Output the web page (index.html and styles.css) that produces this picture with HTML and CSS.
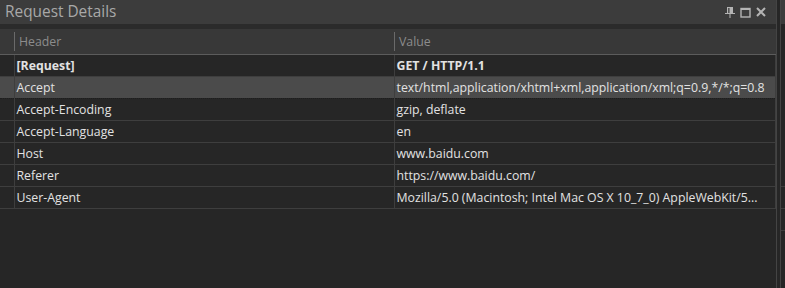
FILE: index.html
```html
<!DOCTYPE html>
<html lang="en">

<head>
    <meta charset="UTF-8" />
    <meta name="viewport" content="width=device-width, initial-scale=1" />
    <title>Request Details</title>
    <link rel="stylesheet" href="styles.css">
</head>

<body>
    <div class="panel">
        <div class="panel-main">
            <div class="titulo-barra">
                <span class="titulo">Request Details</span>
                <div class="botones-ventana">
                    <svg width="10" height="12" viewBox="0 0 10 12"><path d="M2 1h6v6h2v1H5.5v4h-1V8H0V7h2z M3.2 2v5h1.3V2z" fill="#b4b4b4" fill-rule="evenodd"/></svg>
                    <svg width="11" height="11" viewBox="0 0 11 11"><rect x="1" y="1.5" width="9" height="8.5" fill="none" stroke="#b4b4b4" stroke-width="1.4"/><rect x="1" y="1" width="9" height="2" fill="#b4b4b4"/></svg>
                    <svg width="10" height="10" viewBox="0 0 10 10"><path d="M1 1l8 8M9 1l-8 8" stroke="#b4b4b4" stroke-width="2"/></svg>
                </div>
            </div>
            <div class="separador"></div>
            <table class="tabla-detalles">
                <thead>
                    <tr>
                        <th class="col-fila"></th>
                        <th class="col-header"><span class="th-texto">Header</span></th>
                        <th><span class="th-texto">Value</span></th>
                    </tr>
                </thead>
                <tbody>
                    <tr class="fila-negrita">
                        <td class="col-fila"></td>
                        <td>[Request]</td>
                        <td>GET / HTTP/1.1</td>
                    </tr>
                    <tr class="fila-seleccionada">
                        <td class="col-fila"></td>
                        <td>Accept</td>
                        <td>text/html,application/xhtml+xml,application/xml;q=0.9,*/*;q=0.8</td>
                    </tr>
                    <tr>
                        <td class="col-fila"></td>
                        <td>Accept-Encoding</td>
                        <td>gzip, deflate</td>
                    </tr>
                    <tr>
                        <td class="col-fila"></td>
                        <td>Accept-Language</td>
                        <td>en</td>
                    </tr>
                    <tr>
                        <td class="col-fila"></td>
                        <td>Host</td>
                        <td>www.baidu.com</td>
                    </tr>
                    <tr>
                        <td class="col-fila"></td>
                        <td>Referer</td>
                        <td>https://www.baidu.com/</td>
                    </tr>
                    <tr>
                        <td class="col-fila"></td>
                        <td>User-Agent</td>
                        <td>Mozilla/5.0 (Macintosh; Intel Mac OS X 10_7_0) AppleWebKit/5...</td>
                    </tr>
                </tbody>
            </table>
        </div>
        <div class="panel-lateral">
            <div class="lateral-cabecera"></div>
            <div class="lateral-cuerpo"></div>
        </div>
    </div>
</body>

</html>
```

FILE: styles.css
```css
body {
    margin: 0;
    background-color: #262626;
    font-family: "Open Sans", "Noto Sans", sans-serif;
    font-size: 12.3px;
    color: #e2e2e2;
}

.panel {
    display: flex;
    height: 288px;
}

.panel-main {
    width: 776px;
    display: flex;
    flex-direction: column;
    border-right: 1px solid #444;
}

.panel-lateral {
    flex: 1;
    margin-left: 3px;
    border-left: 1px solid #444;
    background-color: #262626;
}

.lateral-cabecera {
    height: 24px;
    background-color: #3c3c3c;
}

.lateral-cuerpo {
    margin-top: 162px;
    height: 66px;
    background: repeating-linear-gradient(#3e3e3e 0 1px, transparent 1px 22px);
}

.titulo-barra {
    height: 24px;
    background-color: #3c3c3c;
    display: flex;
    align-items: center;
    justify-content: space-between;
    padding: 0 10px 0 5px;
}

.titulo {
    font-size: 15.4px;
    color: #a8a8a8;
    line-height: 24px;
}

.botones-ventana {
    display: flex;
    gap: 5px;
    align-items: center;
}

.separador {
    height: 5px;
    background-color: #2b2b2b;
}

.tabla-detalles {
    width: 100%;
    border-collapse: collapse;
    table-layout: fixed;
}

.tabla-detalles th {
    height: 25px;
    background-color: #383838;
    border-bottom: 1px solid #5c5c5c;
    text-align: left;
    font-weight: normal;
    color: #8c8c8c;
    padding: 0;
}

.th-texto {
    display: block;
    border-left: 1px solid #6a6a6a;
    padding-left: 4px;
    line-height: 19px;
}

.tabla-detalles th.col-fila,
.tabla-detalles td.col-fila {
    width: 14px;
}

.tabla-detalles th.col-header {
    width: 380px;
}

.tabla-detalles td {
    height: 21px;
    padding: 0 0 0 2px;
    border: 1px solid #3e3e3e;
    border-top: none;
    white-space: nowrap;
    overflow: hidden;
    line-height: 21px;
}

.tabla-detalles td.col-fila {
    padding: 0;
    border-left: none;
}

.fila-negrita td {
    font-weight: bold;
}

.fila-seleccionada td {
    background-color: #4b4b4b;
    border-top: 1px dotted #1e1e1e;
    border-bottom: 1px dotted #1e1e1e;
    height: 20px;
}
```
